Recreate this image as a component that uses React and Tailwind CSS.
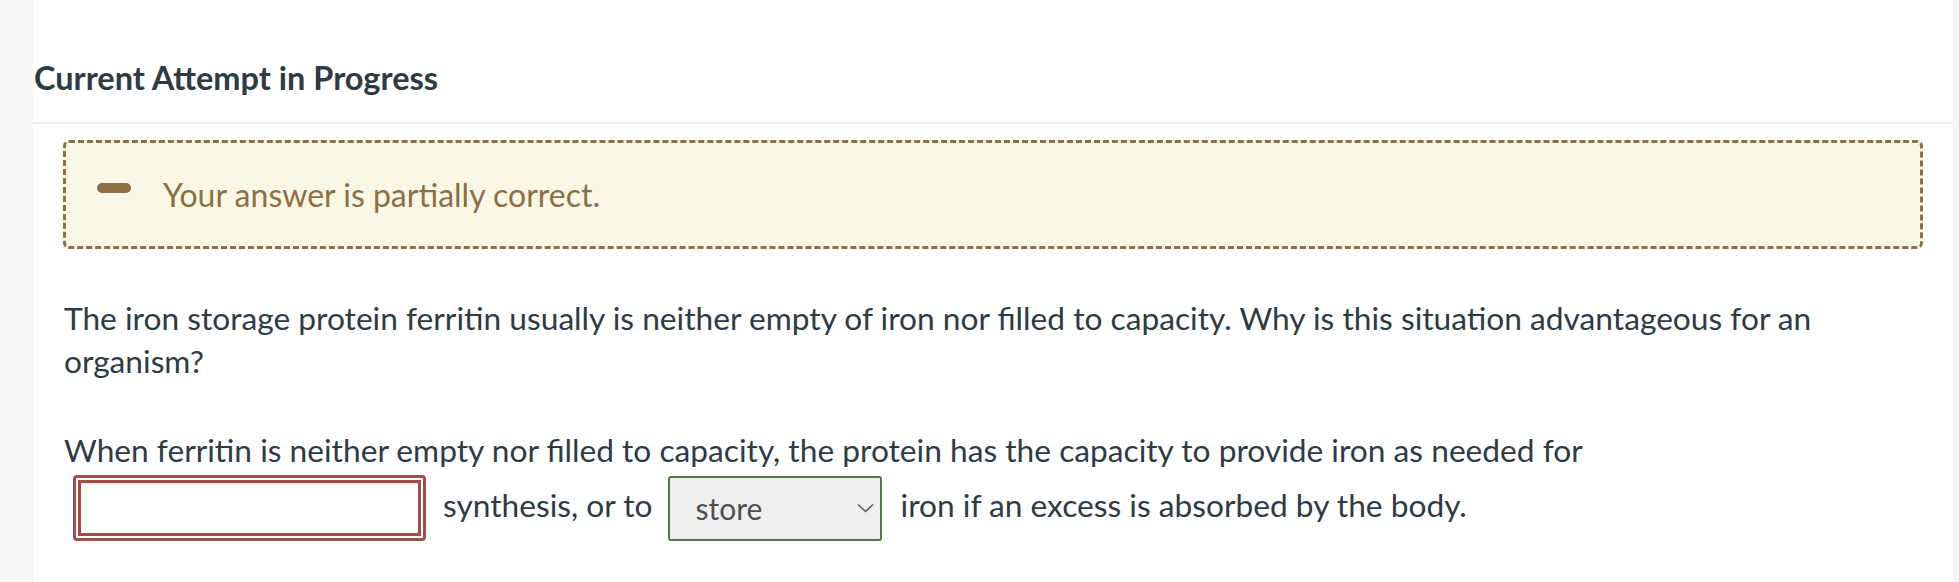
import React from "react";

function ChevronDown() {
  return (
    <svg
      className="pointer-events-none absolute right-[8px] top-1/2 -translate-y-1/2"
      width="17"
      height="10"
      viewBox="0 0 17 10"
      fill="none"
    >
      <path d="M1 1.5 L8.5 8.5 L16 1.5" stroke="#5a5a5a" strokeWidth="1.6" />
    </svg>
  );
}

export default function App() {
  return (
    <div
      className="min-h-[582px] w-full bg-[#f7f7f7] flex"
      style={{ fontFamily: "Lato, 'Open Sans', sans-serif" }}
    >
      <main className="ml-[33px] mr-[6px] flex-1 bg-white text-[#2d3b45]">
        <h2 className="pt-[60px] pl-[1px] text-[32.5px] leading-[36px] font-bold">
          Current Attempt in Progress
        </h2>
        <div className="mt-[26px] h-[2px] bg-[#ededed]" />

        <div className="mx-[30px] mt-[16px] h-[109px] rounded-[6px] border-[3px] border-dashed border-[#8b7045] bg-[#fbf7e5] pl-[31px] pt-[30px] flex items-start">
          <div className="mt-[10px] h-[10px] w-[34px] rounded-full bg-[#8b7045]" />
          <p className="ml-[32px] text-[32px] leading-[43px] text-[#8b7045]">
            Your answer is partially correct.
          </p>
        </div>

        <div className="px-[31px] text-[31.7px] leading-[43px]">
          <p className="mt-[48px]">
            The iron storage protein ferritin usually is neither empty of iron
            nor filled to capacity. Why is this situation advantageous for an
            organism?
          </p>

          <div className="mt-[46px]">
            <p>
              When ferritin is neither empty nor filled to capacity, the
              protein has the capacity to provide iron as needed for
            </p>
            <div className="mt-[3px] flex items-center">
              <div className="ml-[9px] w-[353px] h-[66px] rounded-[4px] border-[3px] border-[#a34b46] bg-white p-[2px]">
                <input
                  type="text"
                  className="block h-full w-full border-[3px] border-[#a34b46] bg-white shadow-[inset_0_2px_2px_rgba(0,0,0,0.08)] outline-none"
                />
              </div>
              <span className="ml-[17px] -mt-[6px]">synthesis, or to</span>
              <div className="relative ml-[15px] w-[214px] h-[65px]">
                <select
                  defaultValue="store"
                  className="h-full w-full appearance-none rounded-[3px] border-2 border-[#4f7a41] bg-[#efefef] pl-[26px] text-[30px] text-[#4f4f4f] outline-none"
                  style={{ fontFamily: "Lato, sans-serif" }}
                >
                  <option value="store">store</option>
                  <option value="release">release</option>
                </select>
                <ChevronDown />
              </div>
              <span className="ml-[19px] -mt-[6px]">
                iron if an excess is absorbed by the body.
              </span>
            </div>
          </div>
        </div>
      </main>
    </div>
  );
}
